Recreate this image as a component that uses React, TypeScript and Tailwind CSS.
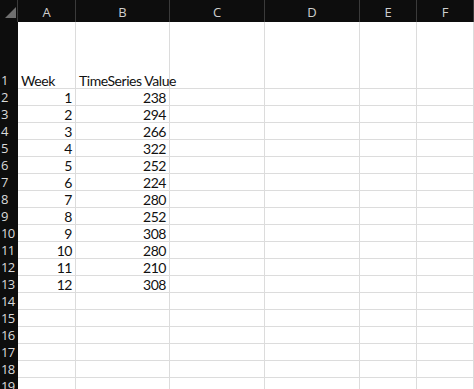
const columns = [
    { label: 'A', width: 'w-[58px]' },
    { label: 'B', width: 'w-[94px]' },
    { label: 'C', width: 'w-[95px]' },
    { label: 'D', width: 'w-[95px]' },
    { label: 'E', width: 'w-[57px]' },
    { label: 'F', width: 'flex-1' },
];

const values = [238, 294, 266, 322, 252, 224, 280, 252, 308, 280, 210, 308];

type Row = { cells: { text: string; align: 'left' | 'right' }[] };

const rows: Row[] = [
    { cells: [{ text: 'Week', align: 'left' }, { text: 'TimeSeries Value', align: 'left' }] },
    ...values.map((v, i) => ({
        cells: [
            { text: String(i + 1), align: 'right' as const },
            { text: String(v), align: 'right' as const },
        ],
    })),
    ...Array.from({ length: 6 }, () => ({ cells: [] })),
];

function Corner() {
    return (
        <div className="w-[18px] h-full shrink-0 relative border-r border-[#3a3a3a]">
            <svg width="18" height="22" className="absolute left-0 top-0">
                <polygon points="5,18 16,18 16,7" fill="#6f6f6f" />
            </svg>
        </div>
    );
}

export default function App() {
    return (
        <div className="w-[474px] h-[389px] overflow-hidden bg-white flex flex-col"
            style={{ fontFamily: 'Lato, "Open Sans", sans-serif' }}>
            {/* column headers */}
            <div className="h-[22px] shrink-0 flex bg-[#0d0d0d] text-[#cfcfcf] text-[13px]"
                style={{ fontFamily: '"Open Sans", sans-serif' }}>
                <Corner />
                {columns.map((col) => (
                    <div key={col.label}
                        className={`${col.width} shrink-0 h-full flex items-center justify-center pt-[3px]
                            border-r border-[#3a3a3a]`}>
                        {col.label}
                    </div>
                ))}
            </div>

            {rows.map((row, r) => (
                <div key={r}
                    className={`${r === 0 ? 'h-[67px]' : 'h-[17px]'} shrink-0 flex`}>
                    <div className="w-[18px] shrink-0 h-full bg-[#0d0d0d] text-[#dadada] text-[13px]
                        flex items-end pl-[1px] pb-[1px] leading-[15px] tracking-[-0.6px]
                        whitespace-nowrap"
                        style={{ fontFamily: '"Open Sans", sans-serif' }}>
                        {r + 1}
                    </div>
                    {columns.map((col, c) => {
                        const cell = row.cells[c];
                        return (
                            <div key={col.label}
                                className={`${col.width} shrink-0 h-full border-r border-b border-[#dcdcdc]
                                    flex items-end px-[3px] text-[14px] leading-[15px] text-[#111]
                                    tracking-[-0.45px] whitespace-nowrap
                                    ${cell?.align === 'right' ? 'justify-end' : 'justify-start'}`}>
                                {cell?.text}
                            </div>
                        );
                    })}
                </div>
            ))}
        </div>
    );
}
